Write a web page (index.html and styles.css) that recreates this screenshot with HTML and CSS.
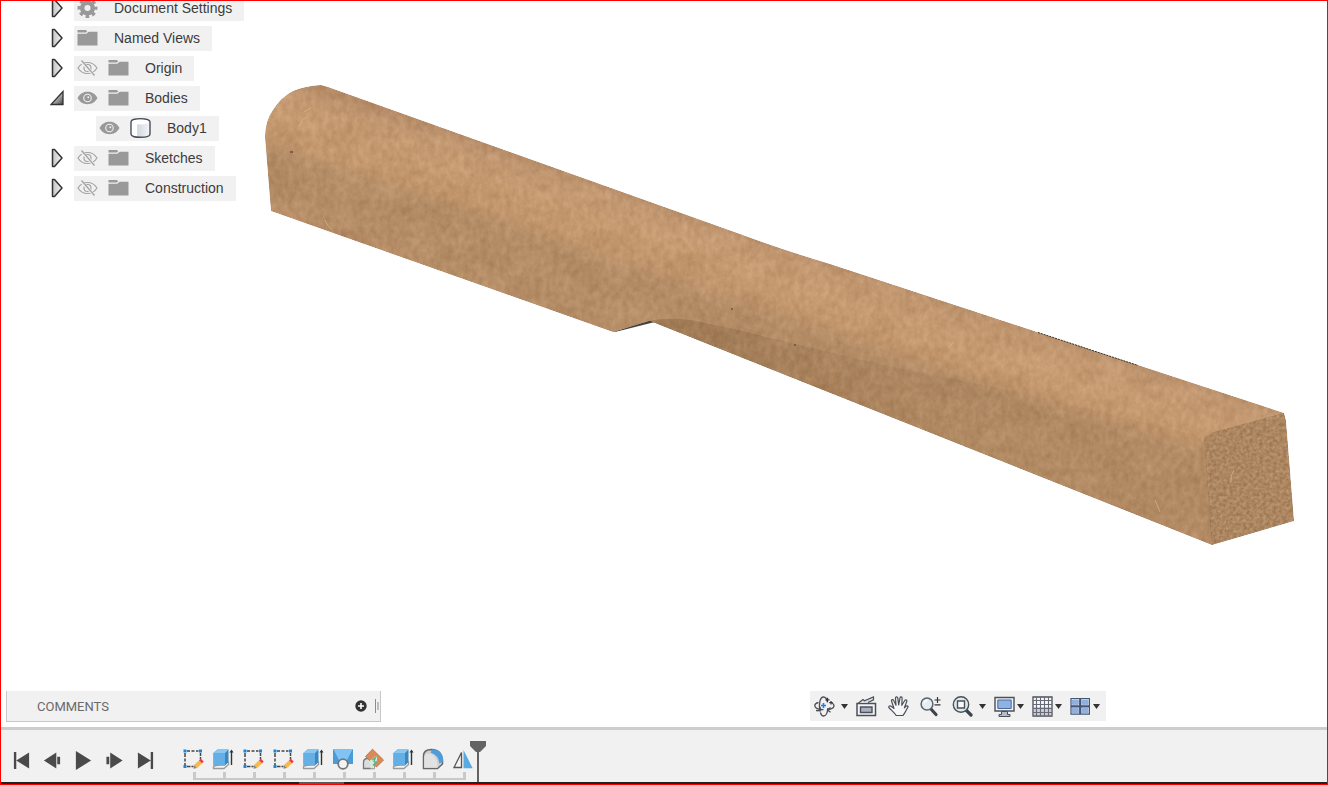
FILE: index.html
```html
<!DOCTYPE html>
<html lang="en">

<head>
  <meta charset="UTF-8" />
  <meta name="viewport" content="width=device-width, initial-scale=1.0" />
  <title>Body1</title>
  <link rel="stylesheet" href="styles.css">
</head>

<body>
  <!-- shared icons -->
  <svg class="sprite" width="0" height="0" aria-hidden="true">
    <defs>
      <linearGradient id="gCaret" x1="0" y1="0" x2="1" y2="0">
        <stop offset="0" stop-color="#c4c4c4" />
        <stop offset="1" stop-color="#f4f4f4" />
      </linearGradient>
      <linearGradient id="gOpen" x1="0" y1="0" x2="1" y2="1">
        <stop offset="0.3" stop-color="#e0e0e0" />
        <stop offset="1" stop-color="#444" />
      </linearGradient>
      <linearGradient id="gBody" x1="0" y1="0" x2="1" y2="0">
        <stop offset="0" stop-color="#fff" />
        <stop offset="0.3" stop-color="#fff" />
        <stop offset="0.35" stop-color="#d3d7e0" />
        <stop offset="1" stop-color="#f5f6f9" />
      </linearGradient>
    </defs>
    <symbol id="closed" viewBox="0 0 14 20">
      <path d="M2.500 1.500h2l7.500 8.500-7.500 8.500h-2z" fill="url(#gCaret)" stroke="#333" stroke-width="1.500" stroke-linejoin="round" />
    </symbol>
    <symbol id="opened" viewBox="0 0 14 20">
      <path d="M13 3.500v13H1z" fill="url(#gOpen)" stroke="#333" stroke-width="1.300" />
    </symbol>
    <symbol id="folder" viewBox="0 0 21 20">
      <path d="M.5 2h8.500l1.500 1.800h10V17.500H.5z" fill="#999" />
      <path d="M0 5.200h9l2.500-2.200" fill="none" stroke="#f1f1f1" stroke-width="1.300" />
      <path d="M11.500 1h10v2h-10z" fill="#f1f1f1" />
    </symbol>
    <symbol id="eye" viewBox="0 0 21 20">
      <path d="M.5 10C3 5.500 6.500 3.800 10.500 3.800S18 5.500 20.500 10c-2.500 4.500-6 6.200-10 6.200S3 14.500.5 10z" fill="#999" />
      <circle cx="10.500" cy="10" r="4.300" fill="#f1f1f1" />
      <circle cx="10.500" cy="10" r="3.200" fill="#999" />
      <circle cx="11.300" cy="9.200" r="1" fill="#f1f1f1" />
    </symbol>
    <symbol id="hidden" viewBox="0 0 21 20">
      <g fill="none" stroke="#a3a3a3" stroke-width="1.200">
        <path d="M1 10C3.500 6 7 4.500 10.500 4.500S17.500 6 20 10c-2.500 4-6 5.500-9.500 5.500S3.500 14 1 10z" />
        <circle cx="10.500" cy="10" r="3.500" />
        <path d="M4 3l13.500 14.500" stroke="#f1f1f1" stroke-width="3" />
        <path d="M4.500 2.500l13 15" stroke-width="1.300" />
      </g>
    </symbol>
    <symbol id="sketch" viewBox="0 0 22 22">
      <path d="M5 3h3M9.500 3h3M14 3h2.500M3 5v4M3 10.500v3M3 15v2M5 18.500h3.500M9.500 18.500h2M18.500 5v3M18.500 9v2" fill="none" stroke="#444" stroke-width="1.500" />
      <path d="M1.500 1.500h3v3h-3zM17 1.500h3v3h-3zM1.500 17h3v3h-3z" fill="#0e87e6" />
      <path d="M12 17l5.500-5 3 3-5.500 5z" fill="#f9b84a" />
      <path d="M17 12.200l1.700-1.600 3 3-1.700 1.600z" fill="#f0384a" />
      <path d="M12 17l3 3-3.500.8z" fill="#888" />
    </symbol>
    <symbol id="extrude" viewBox="0 0 22 22">
      <path d="M1.500 18.500v2H12l4.500-4v-2.500z" fill="#f4f4f4" stroke="#9a9a9a" stroke-width="1.300" />
      <path d="M1.500 5l4-3.500h11V14L13 17.500H1.500z" fill="#3988c4" />
      <path d="M1.500 5l4-3.500h11L13 5z" fill="#8ac8f2" />
      <path d="M1.500 5H13v12.500H1.500z" fill="#65afe5" />
      <path d="M19.500 17V3" stroke="#333" stroke-width="1.400" />
      <path d="M17.500 4.500l2-3 2 3z" fill="#333" />
    </symbol>
    <symbol id="dd" viewBox="0 0 7 5">
      <path d="M0 0h7L3.500 5z" fill="#333" />
    </symbol>
  </svg>

  <div class="app">
    <main class="stage">
      <svg class="model" viewBox="1 1 1326 726" role="img" aria-label="Body1">
        <defs>
          <linearGradient id="wood" gradientUnits="userSpaceOnUse" x1="600" y1="181" x2="552" y2="325">
            <stop offset="0" stop-color="#b48b66" />
            <stop offset="0.07" stop-color="#c09670" />
            <stop offset="0.25" stop-color="#c79b72" />
            <stop offset="0.38" stop-color="#c2966d" />
            <stop offset="0.54" stop-color="#b38c66" />
            <stop offset="1" stop-color="#b68d67" />
          </linearGradient>
          <linearGradient id="under" gradientUnits="userSpaceOnUse" x1="650" y1="0" x2="1010" y2="0">
            <stop offset="0" stop-color="#8f6d49" stop-opacity="0.6" />
            <stop offset="0.5" stop-color="#9a7650" stop-opacity="0.4" />
            <stop offset="1" stop-color="#a07c55" stop-opacity="0.15" />
          </linearGradient>
          <filter id="grain" x="0" y="0" width="1" height="1" color-interpolation-filters="sRGB">
            <feTurbulence type="fractalNoise" baseFrequency="0.17 0.13" numOctaves="4" seed="4" />
            <feColorMatrix values="1 0 0 0 0  1 0 0 0 0  1 0 0 0 0  0 0 0 0 1" result="fine" />
            <feTurbulence type="fractalNoise" baseFrequency="0.03 0.04" numOctaves="2" seed="9" />
            <feColorMatrix values="0 1 0 0 0  0 1 0 0 0  0 1 0 0 0  0 0 0 0 1" result="coarse" />
            <feComposite in="SourceGraphic" in2="fine" operator="arithmetic" k2="1" k3="0.11" k4="-0.055" />
            <feComposite in2="coarse" operator="arithmetic" k2="1" k3="0.07" k4="-0.035" />
            <feComposite in2="SourceGraphic" operator="in" />
          </filter>
          <filter id="endGrain" x="0" y="0" width="1" height="1" color-interpolation-filters="sRGB">
            <feTurbulence type="fractalNoise" baseFrequency="0.3" numOctaves="4" seed="2" />
            <feColorMatrix values="1 0 0 0 0  1 0 0 0 0  1 0 0 0 0  0 0 0 0 1" result="fine" />
            <feComposite in="SourceGraphic" in2="fine" operator="arithmetic" k2="1" k3="0.22" k4="-0.11" />
            <feComposite in2="SourceGraphic" operator="in" />
          </filter>
        </defs>
        <path d="M613 332l38-12 4 2-40 10z" fill="#444" />
        <g filter="url(#grain)">
          <path d="M265 137Q265 121 273 110Q281 97 293 91Q305 86 321 85L328 87L740 234Q780 249 830 264L1040 333L1284 413L1240 480L1212 545L650 321L613 332L271 211z" fill="url(#wood)" />
          <path d="M650 321Q666 317 690 320Q720 325 800 345Q900 370 1010 390L1204 437L1212 545z" fill="url(#under)" />
        </g>
        <path d="M1204 438Q1208 434 1218 431L1284 413L1286 421L1294 521L1212 545z" fill="#ab8660" filter="url(#endGrain)" />
        <path d="M1234 470q-4 6-3 12M299 127q3-8 8-11M304 112l7-4M325 220q2 6 6 9M948 348l6-6M1155 500l5 12" fill="none" stroke="#dcb98e" stroke-opacity="0.7" />
        <path d="M290 151h3v2h-3zM731 308h2v2h-2zM794 344h2v2h-2z" fill="#6b4c33" fill-opacity="0.7" />
        <path d="M1038 332.500l100 33" stroke="#3a332b" stroke-dasharray="2 1" />
      </svg>

      <ul class="browser">
        <li>
          <button class="caret" aria-label="Expand"><svg><use href="#closed" /></svg></button>
          <div class="node">
            <svg class="icon" viewBox="0 0 21 20">
              <circle cx="10.500" cy="10" r="5.300" fill="none" stroke="#999" stroke-width="4.500" />
              <circle cx="10.500" cy="10" r="8.200" fill="none" stroke="#999" stroke-width="3.500" stroke-dasharray="3.440 3" stroke-dashoffset="1.700" />
            </svg>
            <span>Document Settings</span>
          </div>
        </li>
        <li>
          <button class="caret" aria-label="Expand"><svg><use href="#closed" /></svg></button>
          <div class="node">
            <svg class="icon"><use href="#folder" /></svg>
            <span>Named Views</span>
          </div>
        </li>
        <li>
          <button class="caret" aria-label="Expand"><svg><use href="#closed" /></svg></button>
          <div class="node">
            <button aria-label="Show"><svg class="icon"><use href="#hidden" /></svg></button>
            <svg class="icon"><use href="#folder" /></svg>
            <span>Origin</span>
          </div>
        </li>
        <li>
          <button class="caret" aria-label="Collapse"><svg><use href="#opened" /></svg></button>
          <div class="node">
            <button aria-label="Hide"><svg class="icon"><use href="#eye" /></svg></button>
            <svg class="icon"><use href="#folder" /></svg>
            <span>Bodies</span>
          </div>
        </li>
        <li class="child">
          <div class="node">
            <button aria-label="Hide"><svg class="icon"><use href="#eye" /></svg></button>
            <svg class="icon" viewBox="0 0 21 20">
              <path d="M1 4Q1 .7 10.500 .7T20 4v12q0 3.300-9.500 3.300T1 16z" fill="url(#gBody)" stroke="#4a4f5c" stroke-width="1.400" />
              <path d="M2 4Q4 6.500 10.500 6.500T19 4Q17 1.600 10.500 1.600T2 4z" fill="#fff" />
            </svg>
            <span>Body1</span>
          </div>
        </li>
        <li>
          <button class="caret" aria-label="Expand"><svg><use href="#closed" /></svg></button>
          <div class="node">
            <button aria-label="Show"><svg class="icon"><use href="#hidden" /></svg></button>
            <svg class="icon"><use href="#folder" /></svg>
            <span>Sketches</span>
          </div>
        </li>
        <li>
          <button class="caret" aria-label="Expand"><svg><use href="#closed" /></svg></button>
          <div class="node">
            <button aria-label="Show"><svg class="icon"><use href="#hidden" /></svg></button>
            <svg class="icon"><use href="#folder" /></svg>
            <span>Construction</span>
          </div>
        </li>
      </ul>

      <div class="bottom">
        <div class="comments">
          <span>COMMENTS</span>
          <button aria-label="Add comment">
            <svg width="12" height="12" viewBox="0 0 12 12">
              <circle cx="6" cy="6" r="5.700" fill="#333" />
              <path d="M6 3v6M3 6h6" stroke="#fff" stroke-width="1.600" />
            </svg>
          </button>
          <svg class="grip" width="4" height="14" viewBox="0 0 4 14">
            <path d="M.5 0v14M3 3v8" stroke="#8c8c8c" />
          </svg>
        </div>

        <nav class="navbar">
          <button class="wide" aria-label="Orbit">
            <svg class="tool" viewBox="0 0 21 21">
              <g fill="none" stroke="#4b4f58" stroke-width="1.300">
                <path d="M6 14.500C4.500 8 6 1 9.500 1c2 0 3.500 2.500 4 5.500M14 12c-.5 4.500-2 8-4.500 8-1.500 0-2.500-1.500-3.200-3.500" />
                <path d="M4.500 6.500C2 7 .8 8.500.8 9.700c0 2.300 4 4 8.700 4M18 7c1.500.8 2 1.800 2 2.700 0 2-3 3.500-6.500 4" />
                <path d="M2 14.500l4.500.3-.5-4M16.500 11.500l-3 2.500 3 2.300" />
              </g>
              <path d="M9.500 7v5M7 9.500h5" stroke="#1684e8" stroke-width="1.600" />
              <path d="M13.500 1.800v4M11.500 3.800h4M17 5v3.400M15.300 6.700h3.400" stroke="#333" stroke-width="1.200" />
            </svg>
            <svg class="dd"><use href="#dd" /></svg>
          </button>
          <button class="plain" aria-label="Look at">
            <svg class="tool" viewBox="0 0 21 21">
              <path d="M1 7.500h18.500v12H1z" fill="#f4f4f6" stroke="#4b4f58" stroke-width="1.500" />
              <path d="M4.500 11h11.500v5.500H4.500z" fill="#a9b0bf" stroke="#4b4f58" stroke-width="1.400" />
              <path d="M2.500 7L7 3.500l1.500 1.200L17.500 1v2.800L12 6.500" fill="#dfe1e6" stroke="#4b4f58" stroke-width="1.200" />
            </svg>
          </button>
          <button class="plain" aria-label="Pan">
            <svg class="tool" viewBox="0 0 21 21">
              <path d="M8.200 19.500C6.500 16.500 3 14 .9 11.500c-.5-1.500 1.200-2 2.300-1.200L6 12.500 3.500 5c-.2-1.500 1.600-1.900 2.200-.5L8 9.200 7.500 2.200c0-1.700 2-1.700 2.300 0l.9 6.600L12 1.800c.4-1.500 2.200-1.200 2.100.4L13.800 9.300l3-4.800c.8-1.300 2.500-.3 1.900 1.100l-2.300 6.200c1-1.500 2-2.300 3.300-1.800.8.500.2 1.300-.3 2-1.800 3-2.500 5.500-4.500 7.500z" fill="#f7f7f8" stroke="#4b4f58" stroke-width="1.200" stroke-linejoin="round" />
            </svg>
          </button>
          <button class="plain" aria-label="Zoom">
            <svg class="tool" viewBox="0 0 21 21">
              <path d="M10.500 12.500l5.500 6" stroke="#3f434b" stroke-width="3.200" stroke-linecap="round" />
              <circle cx="7" cy="8" r="5.900" fill="#e3eef2" stroke="#5c626d" stroke-width="1.500" />
              <path d="M4 7q1-2.500 3.500-2.500" stroke="#fff" stroke-width="1.500" fill="none" />
              <path d="M17.500 1v6M14.500 4h6M14.500 8.800h6" stroke="#333" stroke-width="1.200" />
            </svg>
          </button>
          <button class="wide" aria-label="Zoom window">
            <svg class="tool" viewBox="0 0 21 21">
              <path d="M14.500 14.500l4.500 4.500" stroke="#3f434b" stroke-width="3.200" stroke-linecap="round" />
              <circle cx="9" cy="8.500" r="7.700" fill="#d9ebeb" stroke="#4b4f58" stroke-width="1.400" />
              <path d="M5.500 5h7v7h-7z" fill="#fafafa" stroke="#4b4f58" stroke-width="1.400" />
            </svg>
            <svg class="dd"><use href="#dd" /></svg>
          </button>
          <button aria-label="Display settings">
            <svg class="tool" viewBox="0 0 21 21">
              <path d="M1 1.500h19v13.500H1z" fill="#f3f3f5" stroke="#4b4f58" stroke-width="1.400" />
              <path d="M3.800 4h13.400v8.500H3.800z" fill="#8db2e3" stroke="#466a9d" />
              <path d="M7.500 15.500h6v3h2.500v2H5v-2h2.500z" fill="#b9bcc4" stroke="#4b4f58" />
            </svg>
            <svg class="dd"><use href="#dd" /></svg>
          </button>
          <button aria-label="Grid and snaps">
            <svg class="tool" viewBox="0 0 21 21">
              <path d="M1 1h19v19H1z" fill="#f8f8f8" stroke="#4b4f58" stroke-width="1.300" />
              <path d="M1 11h19v9H1z" fill="#848b9c" fill-opacity="0.4" />
              <path d="M4.500 1v19M8.500 1v19M12.500 1v19M16.500 1v19M1 4.500h19M1 8.500h19M1 12.500h19M1 16.500h19" stroke="#666b77" stroke-width="1.100" />
            </svg>
            <svg class="dd"><use href="#dd" /></svg>
          </button>
          <button aria-label="Viewports">
            <svg class="tool" viewBox="0 0 21 21">
              <path d="M1 2.500h8.700v7.300H1zM10.700 2.500h8.700v7.300h-8.700zM1 10.800h8.700v7.300H1zM10.700 10.800h8.700v7.300h-8.700z" fill="#e5ebf5" stroke="#465672" stroke-width="1.200" />
              <path d="M2.500 4h5.700v4.300H2.500zM12.200 4h5.700v4.300h-5.700zM2.500 12.300h5.700v4.300H2.500zM12.200 12.300h5.700v4.300h-5.700z" fill="#8fb1e0" stroke="#8fadd8" />
            </svg>
            <svg class="dd"><use href="#dd" /></svg>
          </button>
        </nav>
      </div>
    </main>

    <footer class="timeline">
      <div class="player">
        <button aria-label="Go to start"><svg viewBox="0 0 20 20"><path d="M2 1h2.500v18H2zM18 1.500v17L4.500 10z" /></svg></button>
        <button aria-label="Step back"><svg viewBox="0 0 20 20"><path d="M14 1.500v17L1 10zM15 6h3v8h-3z" /></svg></button>
        <button aria-label="Play"><svg viewBox="0 0 20 20"><path d="M2 0v20L18 10z" /></svg></button>
        <button aria-label="Step forward"><svg viewBox="0 0 20 20"><path d="M5.500 1.500v17L18.500 10zM1.500 6h3v8h-3z" /></svg></button>
        <button aria-label="Go to end"><svg viewBox="0 0 20 20"><path d="M15.500 1H18v18h-2.500zM2 1.500v17l13.500-8.500z" /></svg></button>
      </div>
      <ol class="features">
        <li><button aria-label="Sketch1"><svg><use href="#sketch" /></svg></button></li>
        <li><button aria-label="Extrude1"><svg><use href="#extrude" /></svg></button></li>
        <li><button aria-label="Sketch2"><svg><use href="#sketch" /></svg></button></li>
        <li><button aria-label="Sketch3"><svg><use href="#sketch" /></svg></button></li>
        <li><button aria-label="Extrude2"><svg><use href="#extrude" /></svg></button></li>
        <li>
          <button aria-label="Loft1">
            <svg viewBox="0 0 22 22">
              <path d="M1 1.500h20V16h-5L11 11 6 16H1z" fill="#3585c4" />
              <path d="M1.500 1.500h19L15 13H7z" fill="#7fc4f4" />
              <path d="M1 1.500l5.500 9.500v5H1zM21 1.500L15.500 11v5H21z" fill="#4b9bd6" />
              <circle cx="11" cy="16" r="4.800" fill="#f4f4f4" stroke="#777" stroke-width="1.800" />
            </svg>
          </button>
        </li>
        <li>
          <button aria-label="Plane1">
            <svg viewBox="0 0 22 22">
              <path d="M1.500 20.500v-6q0-4 4-4H12v10z" fill="#ddd" stroke="#777" stroke-width="1.300" />
              <path d="M10.500 1.200L21.500 12 14.500 19 3.500 8.500z" fill="#d98a58" stroke="#c27848" />
              <path d="M7.500 13l5.500-4.500h2v4l-3 3v5H8.500v-4z" fill="#d5ecdc" />
              <path d="M10 12l3.500-2.500-1.500 4 2 1-3 3" fill="none" stroke="#5cb583" stroke-width="1.400" />
            </svg>
          </button>
        </li>
        <li><button aria-label="Extrude3"><svg><use href="#extrude" /></svg></button></li>
        <li>
          <button aria-label="Fillet1">
            <svg viewBox="0 0 22 22">
              <path d="M1.500 20.500V8q0-6.500 8-6.500Q20.500 2 20.500 14v2l-5 4.500z" fill="#d0d0d0" stroke="#666" stroke-width="1.500" />
              <path d="M10.500 1.200q10.500.8 10.800 12.300l-4 2Q16.500 7 8.500 4.500z" fill="#4b9edb" />
              <path d="M2.200 19.800V9Q2.500 5.500 6 5.500q9.500.5 9.500 14.300z" fill="#e2e2e2" />
            </svg>
          </button>
        </li>
        <li>
          <button aria-label="Mirror1">
            <svg viewBox="0 0 22 22">
              <path d="M9.500 4.500v15H2z" fill="#f4f4f4" stroke="#555" stroke-width="1.300" />
              <path d="M11.500 2v18.200h9.200z" fill="#5aaae2" />
            </svg>
          </button>
        </li>
      </ol>
      <svg class="marker" viewBox="0 0 16 41">
        <path d="M0 0h16v5l-6 6H9v30H7V11H6L0 5z" fill="#636363" />
      </svg>
      <div class="thumb"></div>
    </footer>
  </div>
</body>

</html>
```

FILE: styles.css
```css
* {
  box-sizing: border-box;
}

body {
  margin: 0;
  background-color: #fff;
  font-family: "Liberation Sans", Arial, sans-serif;
  font-size: 14px;
  color: #3c3c3c;
}

button {
  padding: 0;
  border: none;
  background: none;
  cursor: pointer;
}

svg {
  display: block;
}

ul,
ol {
  margin: 0;
  padding: 0;
  list-style: none;
}

.sprite {
  position: absolute;
}

.app {
  display: flex;
  flex-direction: column;
  min-height: 100vh;
  border: 1px solid red;
}

.stage {
  position: relative;
  display: flex;
  flex: 1;
  flex-direction: column;
  justify-content: space-between;
  overflow: hidden;
}

/* the 3D view lies under the browser tree */
.model {
  position: absolute;
  top: 0;
  left: 0;
  width: 100%;
  height: 100%;
}

/* browser tree, scrolled a little */
.browser {
  position: relative;
  margin-top: -8px;
  padding-left: 49px;
}

.browser li {
  display: flex;
  align-items: center;
  gap: 10px;
  height: 30px;
}

.browser .child {
  padding-left: 46px;
}

.caret svg {
  width: 14px;
  height: 20px;
}

.node {
  display: flex;
  align-items: center;
  gap: 10px;
  height: 25px;
  padding: 0 12px 0 3px;
  background-color: #f1f1f1;
}

.node span {
  margin-left: 6px;
}

.icon {
  width: 21px;
  height: 20px;
}

.bottom {
  position: relative;
  display: flex;
  justify-content: space-between;
  padding: 0 221px 5px 5px;
}

.comments {
  display: flex;
  align-items: center;
  width: 375px;
  height: 31px;
  padding: 0 1px 0 30px;
  border: 1px solid #c8c8c8;
  border-top: none;
  background-color: #f1f1f1;
  font-family: Roboto, sans-serif;
  font-size: 13px;
  color: #6a6a6a;
}

.comments button {
  margin-left: auto;
}

.grip {
  margin-left: 8px;
}

.navbar {
  display: flex;
  align-items: center;
  gap: 8px;
  height: 30px;
  padding: 0 6px 0 4px;
  background-color: #f1f1f1;
}

.navbar button {
  display: flex;
  align-items: center;
  gap: 2px;
}

.navbar .plain {
  padding-right: 3px;
}

.navbar .wide {
  gap: 6px;
}

.tool {
  width: 21px;
  height: 21px;
}

.dd {
  width: 7px;
  height: 5px;
}

.timeline {
  position: relative;
  display: flex;
  height: 57px;
  padding-left: 5px;
  border-top: 3px solid #cdcdcd;
  border-bottom: 2px solid #222;
  background-color: #f1f1f1;
}

.player {
  display: flex;
  align-items: center;
  padding-top: 8px;
}

.player button {
  width: 31px;
}

.player svg {
  width: 19px;
  height: 19px;
  margin: 0 auto;
  fill: #4a4a4a;
}

.features {
  display: flex;
  margin-left: 18px;
}

.features li {
  position: relative;
  width: 30px;
  padding-top: 18px;
}

.features svg {
  width: 22px;
  height: 22px;
  margin-left: 3px;
}

/* bracket under the features */
.features li::before {
  content: "";
  position: absolute;
  left: 0;
  right: 0;
  bottom: 2px;
  height: 2px;
  background-color: #c9c9c9;
}

.features li:first-child::before {
  left: 14px;
}

.features li:last-child::before {
  right: 14px;
}

.features li::after {
  content: "";
  position: absolute;
  left: 14px;
  bottom: 2px;
  width: 3px;
  height: 8px;
  background-color: #c9c9c9;
}

.marker {
  position: relative;
  width: 16px;
  height: 41px;
  margin-top: 11px;
  margin-left: -9px;
}

.thumb {
  position: absolute;
  left: 298px;
  bottom: -2px;
  width: 45px;
  height: 2px;
  background-color: #5a5a56;
}
```
